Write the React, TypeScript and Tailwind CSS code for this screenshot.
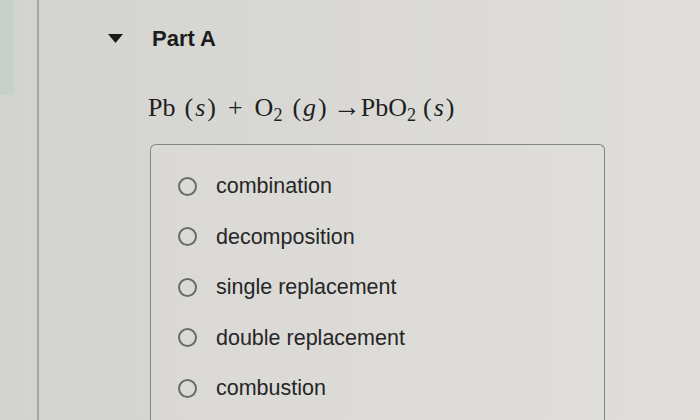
const options = ['combination', 'decomposition', 'single replacement', 'double replacement', 'combustion'];

export default function App() {
  return (
    <div className="w-[700px] h-[420px] overflow-hidden flex bg-gradient-to-r from-[#d3d3d0] via-[#dad9d5] to-[#dfded9]">
      <div className="w-[37px] shrink-0">
        <div className="w-[14px] h-[95px] bg-[#c8d0cc]" />
      </div>
      <div className="w-[2px] shrink-0 bg-[#a3a3a1]" />

      <div className="flex-1 flex flex-col">
        <div className="flex items-center h-[40px] mt-[18px] pl-[69px]">
          <svg width="15" height="9" viewBox="0 0 15 9" className="mr-[29px]">
            <polygon points="0,0 15,0 7.5,9" fill="#1a1a1a" />
          </svg>
          <span className="text-[22px] font-bold text-[#1c1c1c] font-['Liberation_Sans',Arial,sans-serif]">Part A</span>
        </div>

        <div className="pl-[109px] mt-[35px] text-[26px] text-[#1f1f1f] font-['Liberation_Serif','Times_New_Roman',serif] leading-none whitespace-nowrap">
          <span>Pb</span>
          <span className="ml-[9px]">(<i className="mx-[2px]">s</i>)</span>
          <span className="mx-[12px]">+</span>
          <span>O<sub className="text-[18px]">2</sub></span>
          <span className="ml-[10px]">(<i className="mx-[2px]">g</i>)</span>
          <span className="ml-[6px] text-[28px]">→</span>
          <span>PbO<sub className="text-[18px]">2</sub></span>
          <span className="ml-[7px]">(<i className="mx-[2px]">s</i>)</span>
        </div>

        <div className="ml-[111px] mt-[23px] w-[455px] flex-1 border-[1.5px] border-b-0 border-[#858583] rounded-t-[6px] pt-[16px] pl-[27px] bg-[#e0dfdb]/40">
          {options.map((o) => (
            <div key={o} className="flex items-center h-[50.5px]">
              <div className="w-[19px] h-[19px] rounded-full border-2 border-[#6a6a68] shrink-0" />
              <span className="ml-[19px] text-[21.5px] text-[#262626] font-['Liberation_Sans',Arial,sans-serif]">{o}</span>
            </div>
          ))}
        </div>
      </div>
    </div>
  );
}
